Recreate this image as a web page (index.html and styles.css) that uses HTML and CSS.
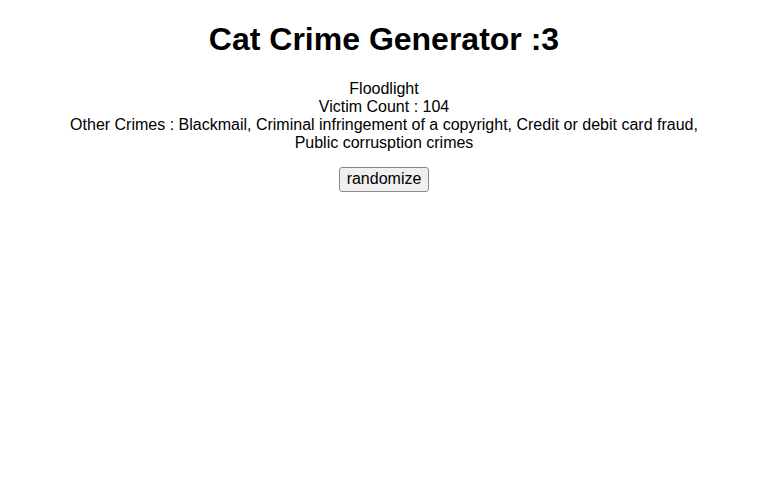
FILE: index.html
```html
<!DOCTYPE html>
<html lang="en">
<head>
    <meta charset="UTF-8">
    <meta name="viewport" content="width=device-width, initial-scale=1.0">
    <title>Cat Crime Generator</title>
    <link rel="stylesheet" href="styles.css">
</head>
<body>
    <h1>Cat Crime Generator :3</h1>

    <div class="result">
        <div id="crimeName">Floodlight</div>
        <div id="victimCount">Victim Count : 104</div>
        <div id="otherCrimes">Other Crimes : Blackmail, Criminal infringement of a copyright, Credit or debit card fraud, Public corrusption crimes</div>
    </div>

    <p class="actions">
        <button type="button" id="randomizeBtn">randomize</button>
    </p>
</body>
</html>
```

FILE: styles.css
```css
body {
    font-family: "Liberation Sans", Arial, sans-serif;
    font-size: 16px;
    color: #000;
    background-color: #fff;
    text-align: center;
}

h1 {
    font-size: 32px;
    margin: 13.44px 0 21.44px;
}

.result {
    margin: 0 auto;
    max-width: 640px;
}

.actions {
    margin: 15px 0;
}

button {
    font-family: "Liberation Sans", Arial, sans-serif;
    font-size: 16px;
    padding: 2px 7px 3px;
    background-color: #efefef;
    border: 1px solid #8a8a8a;
    border-radius: 3px;
    color: #000;
}
```
